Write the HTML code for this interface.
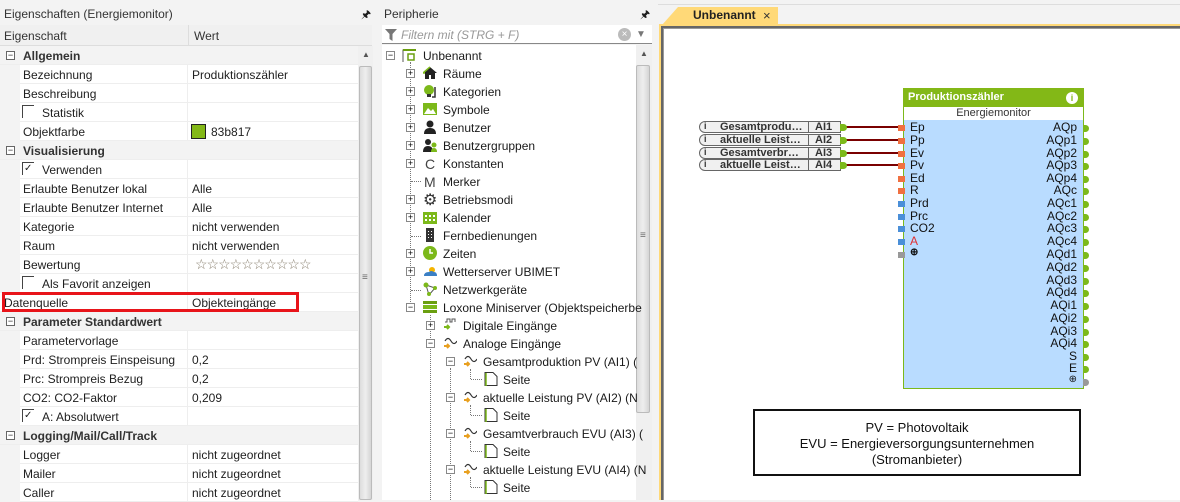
<!DOCTYPE html>
<html><head><meta charset="utf-8"><style>
*{margin:0;padding:0;box-sizing:border-box}
body{width:1180px;height:500px;overflow:hidden;background:#f3f3f3;font-family:"Liberation Sans",sans-serif;font-size:12px;color:#1e1e1e;position:relative}
.a{position:absolute;white-space:nowrap}
.row{position:absolute;left:0;width:358px;height:19px;border-bottom:1px solid #eee;background:#fff}
.row .k{position:absolute;left:23px;top:3px}
.row .v{position:absolute;left:192px;top:3px}
.row .sep{position:absolute;left:187px;top:0;width:1px;height:19px;background:#eee}
.row .ind{position:absolute;left:0;top:0;width:20px;height:19px;background:#f3f3f3}
.cat{background:#f3f3f3}
.cat .k{font-weight:bold;color:#333}
.box{position:absolute;left:6px;top:5px;width:9px;height:9px;border:1px solid #666;background:#fff;font-size:9px;line-height:7px;text-align:center}
.cb{position:absolute;left:22px;top:2px;width:12px;height:13px;border-left:1px solid #444;border-top:1px solid #444;font-size:10px;line-height:12px;padding-left:1px}
.t{position:absolute;font-size:12px;white-space:nowrap;color:#1a1a1a}
.pm{position:absolute;width:9px;height:9px;border:1px solid #888;background:#fff;font-size:9px;line-height:7px;text-align:center;color:#000}
.ic{position:absolute;width:14px;height:14px}
.pin{position:absolute;font-size:11px}
.il{position:absolute;left:910px;font-size:12px;color:#111}
.ol{position:absolute;right:103px;font-size:12px;color:#111;text-align:right}
.ip{position:absolute;left:898px;width:7px;height:6px}
.op{position:absolute;left:1083px;width:6px;height:7px;background:#7cb91a;border-radius:0 4px 4px 0}
.in{position:absolute;left:699px;width:142px;height:12px;border:1px solid #666;background:#f0f0f0;font-size:11px;font-weight:bold;color:#333;border-radius:6px 0 0 6px}
.in span{position:absolute;left:20px;top:-1px}
.in b{position:absolute;left:108px;top:-1px;border-left:1px solid #666;width:33px;height:11px;padding-left:6px;font-weight:bold}
.in i{position:absolute;left:4px;top:-1px;font-style:normal;font-size:9px}
.wire{position:absolute;left:846px;width:52px;height:2px;background:#7a0000}
.gp{position:absolute;left:840px;width:7px;height:7px;background:#7cb91a;border-radius:0 4px 4px 0}
</style></head><body>
<!-- Left panel -->
<div class="a" style="left:4px;top:7px;color:#333">Eigenschaften (Energiemonitor)</div>
<div class="pin" style="left:361px;top:6px">&#x1F588;</div>
<div class="a" style="left:0;top:25px;width:372px;height:21px;background:#f0f0f0;border-bottom:1px solid #ddd"></div>
<div class="a" style="left:188px;top:25px;width:1px;height:21px;background:#ddd"></div>
<div class="a" style="left:4px;top:29px;color:#333">Eigenschaft</div>
<div class="a" style="left:194px;top:29px;color:#333">Wert</div>

<div class="row cat" style="top:46px"><div class="box">−</div><div class="k">Allgemein</div></div>
<div class="row" style="top:65px"><div class="ind"></div><div class="k">Bezeichnung</div><div class="sep"></div><div class="v">Produktionszähler</div></div>
<div class="row" style="top:84px"><div class="ind"></div><div class="k">Beschreibung</div><div class="sep"></div></div>
<div class="row" style="top:103px"><div class="ind"></div><div class="cb"></div><div class="k" style="left:42px">Statistik</div><div class="sep"></div></div>
<div class="row" style="top:122px"><div class="ind"></div><div class="k">Objektfarbe</div><div class="sep"></div><div style="position:absolute;left:191px;top:2px;width:15px;height:15px;background:#83b817;border:1px solid #222"></div><div class="v" style="left:211px">83b817</div></div>
<div class="row cat" style="top:141px"><div class="box">−</div><div class="k">Visualisierung</div></div>
<div class="row" style="top:160px"><div class="ind"></div><div class="cb">✓</div><div class="k" style="left:42px">Verwenden</div><div class="sep"></div></div>
<div class="row" style="top:179px"><div class="ind"></div><div class="k">Erlaubte Benutzer lokal</div><div class="sep"></div><div class="v">Alle</div></div>
<div class="row" style="top:198px"><div class="ind"></div><div class="k">Erlaubte Benutzer Internet</div><div class="sep"></div><div class="v">Alle</div></div>
<div class="row" style="top:217px"><div class="ind"></div><div class="k">Kategorie</div><div class="sep"></div><div class="v">nicht verwenden</div></div>
<div class="row" style="top:236px"><div class="ind"></div><div class="k">Raum</div><div class="sep"></div><div class="v">nicht verwenden</div></div>
<div class="row" style="top:255px"><div class="ind"></div><div class="k">Bewertung</div><div class="sep"></div><div class="v" style="left:195px;top:1px;color:#8a8070;font-size:14px;letter-spacing:-1px">☆☆☆☆☆☆☆☆☆☆</div></div>
<div class="row" style="top:274px"><div class="ind"></div><div class="cb"></div><div class="k" style="left:42px">Als Favorit anzeigen</div><div class="sep"></div></div>
<div class="row" style="top:293px"><div class="k" style="left:4px">Datenquelle</div><div class="sep"></div><div class="v">Objekteingänge</div></div>
<div class="a" style="left:2px;top:292px;width:297px;height:20px;border:3px solid #e8141a"></div>
<div class="row cat" style="top:312px"><div class="box">−</div><div class="k">Parameter Standardwert</div></div>
<div class="row" style="top:331px"><div class="ind"></div><div class="k">Parametervorlage</div><div class="sep"></div></div>
<div class="row" style="top:350px"><div class="ind"></div><div class="k">Prd: Strompreis Einspeisung</div><div class="sep"></div><div class="v">0,2</div></div>
<div class="row" style="top:369px"><div class="ind"></div><div class="k">Prc: Strompreis Bezug</div><div class="sep"></div><div class="v">0,2</div></div>
<div class="row" style="top:388px"><div class="ind"></div><div class="k">CO2: CO2-Faktor</div><div class="sep"></div><div class="v">0,209</div></div>
<div class="row" style="top:407px"><div class="ind"></div><div class="cb">✓</div><div class="k" style="left:42px">A: Absolutwert</div><div class="sep"></div></div>
<div class="row cat" style="top:426px"><div class="box">−</div><div class="k">Logging/Mail/Call/Track</div></div>
<div class="row" style="top:445px"><div class="ind"></div><div class="k">Logger</div><div class="sep"></div><div class="v">nicht zugeordnet</div></div>
<div class="row" style="top:464px"><div class="ind"></div><div class="k">Mailer</div><div class="sep"></div><div class="v">nicht zugeordnet</div></div>
<div class="row" style="top:483px"><div class="ind"></div><div class="k">Caller</div><div class="sep"></div><div class="v">nicht zugeordnet</div></div>
<!-- left scrollbar -->
<div class="a" style="left:358px;top:46px;width:15px;height:454px;background:#f0f0f0"></div>
<div class="a" style="left:362px;top:50px;font-size:8px;color:#555">▲</div>
<div class="a" style="left:359px;top:66px;width:13px;height:434px;background:linear-gradient(90deg,#ddd,#eee,#d5d5d5);border:1px solid #bbb;border-radius:2px"></div>
<div class="a" style="left:362px;top:272px;font-size:10px;color:#666">≡</div>

<!-- Middle panel -->
<div class="a" style="left:384px;top:7px;color:#333">Peripherie</div>
<div class="pin" style="left:640px;top:6px">&#x1F588;</div>
<div class="a" style="left:382px;top:25px;width:270px;height:19px;background:#fff;border-bottom:1px solid #888"></div>
<svg class="a" style="left:384px;top:28px" width="14" height="14"><path d="M1 1h12l-4.5 5v7l-3-2V6z" fill="#777"/></svg>
<div class="a" style="left:401px;top:28px;color:#999;font-style:italic">Filtern mit (STRG + F)</div>
<div class="a" style="left:618px;top:28px;width:13px;height:13px;border-radius:50%;background:#bbb;color:#fff;font-size:10px;line-height:13px;text-align:center">×</div>
<div class="a" style="left:636px;top:29px;font-size:10px;color:#777">▼</div>
<div class="a" style="left:382px;top:45px;width:255px;height:455px;background:#fff"></div>
<div class="a" style="left:636px;top:45px;width:16px;height:455px;background:#f0f0f0"></div>
<div class="a" style="left:640px;top:49px;font-size:8px;color:#555">▲</div>
<div class="a" style="left:636px;top:65px;width:14px;height:348px;background:linear-gradient(90deg,#ddd,#eee,#d5d5d5);border:1px solid #bbb;border-radius:2px"></div>
<div class="a" style="left:640px;top:230px;font-size:10px;color:#666">≡</div>
<div class="a" style="left:652px;top:0;width:8px;height:500px;background:#f3f3f3"></div>

<div class="a" style="left:410px;top:62px;height:250px;border-left:1px dotted #777"></div>
<div class="a" style="left:430px;top:315px;height:185px;border-left:1px dotted #777"></div>
<div class="a" style="left:450px;top:368px;height:132px;border-left:1px dotted #777"></div>

<div class="pm" style="left:386px;top:51px">−</div>
<svg class="ic" style="left:402px;top:48px" width="16" height="16"><rect x="1" y="2" width="14" height="13" fill="#fff" stroke="#555"/><rect x="1" y="1" width="14" height="2" fill="#6a9f10"/><rect x="6" y="6" width="6" height="6" fill="none" stroke="#6a9f10" stroke-width="1.5"/></svg>
<div class="t" style="left:423px;top:49px">Unbenannt</div>
<div class="pm" style="left:406px;top:69px">+</div><svg class="ic" style="left:423px;top:66px"><path d="M7 1L0 7h2v6h4v-4h2v4h4V7h2z" fill="#222"/><path d="M7 1L0 7h2" fill="none" stroke="#7cb91a" stroke-width="1.5"/></svg><div class="t" style="left:443px;top:67px">Räume</div>
<div class="pm" style="left:406px;top:87px">+</div><svg class="ic" style="left:423px;top:84px"><circle cx="6" cy="6" r="5" fill="#7cb91a"/><rect x="4" y="10" width="4" height="3" fill="#333"/><path d="M12 3v10h-3" stroke="#333" stroke-width="1.5" fill="none"/></svg><div class="t" style="left:443px;top:85px">Kategorien</div>
<div class="pm" style="left:406px;top:105px">+</div><svg class="ic" style="left:423px;top:102px"><rect x="0" y="1" width="14" height="12" fill="#7cb91a"/><path d="M1 12l4-6 3 3 2-2 3 5z" fill="#fff"/></svg><div class="t" style="left:443px;top:103px">Symbole</div>
<div class="pm" style="left:406px;top:123px">+</div><svg class="ic" style="left:423px;top:120px"><circle cx="7" cy="4" r="3.5" fill="#222"/><path d="M1 14q0-6 6-6t6 6z" fill="#222"/></svg><div class="t" style="left:443px;top:121px">Benutzer</div>
<div class="pm" style="left:406px;top:141px">+</div><svg class="ic" style="left:423px;top:138px"><circle cx="5" cy="4" r="3" fill="#222"/><path d="M0 14q0-6 5-6t5 6z" fill="#222"/><circle cx="11" cy="7" r="2.5" fill="#7cb91a"/><path d="M8 14q0-4 3-4t3 4z" fill="#7cb91a"/></svg><div class="t" style="left:443px;top:139px">Benutzergruppen</div>
<div class="pm" style="left:406px;top:159px">+</div><div class="t" style="left:425px;top:156px;font-size:14px;color:#444">C</div><div class="t" style="left:443px;top:157px">Konstanten</div>
<div class="a" style="left:411px;top:181px;width:10px;border-top:1px dotted #777"></div><div class="t" style="left:424px;top:174px;font-size:14px;color:#444">M</div><div class="t" style="left:443px;top:175px">Merker</div>
<div class="pm" style="left:406px;top:195px">+</div><div class="t" style="left:423px;top:190px;font-size:16px;color:#333">⚙</div><div class="t" style="left:443px;top:193px">Betriebsmodi</div>
<div class="pm" style="left:406px;top:213px">+</div><svg class="ic" style="left:423px;top:210px"><rect x="0" y="2" width="14" height="12" fill="#7cb91a"/><g fill="#fff"><rect x="2" y="5" width="2" height="2"/><rect x="6" y="5" width="2" height="2"/><rect x="10" y="5" width="2" height="2"/><rect x="2" y="9" width="2" height="2"/><rect x="6" y="9" width="2" height="2"/><rect x="10" y="9" width="2" height="2"/></g></svg><div class="t" style="left:443px;top:211px">Kalender</div>
<div class="a" style="left:411px;top:236px;width:10px;border-top:1px dotted #777"></div><svg class="ic" style="left:423px;top:228px"><rect x="3" y="0" width="8" height="14" fill="#333"/><g fill="#fff"><rect x="5" y="3" width="1" height="1"/><rect x="8" y="3" width="1" height="1"/><rect x="5" y="6" width="1" height="1"/><rect x="8" y="6" width="1" height="1"/><rect x="5" y="9" width="1" height="1"/><rect x="8" y="9" width="1" height="1"/></g></svg><div class="t" style="left:443px;top:229px">Fernbedienungen</div>
<div class="pm" style="left:406px;top:249px">+</div><svg class="ic" style="left:423px;top:246px"><circle cx="7" cy="7" r="7" fill="#7cb91a"/><path d="M7 3v4h3" stroke="#fff" stroke-width="1.5" fill="none"/></svg><div class="t" style="left:443px;top:247px">Zeiten</div>
<div class="pm" style="left:406px;top:267px">+</div><svg class="ic" style="left:423px;top:264px"><circle cx="9" cy="6" r="3" fill="#f5b400"/><path d="M1 12q0-4 5-4q2-2 5 0q3 0 3 4z" fill="#3b7fc4"/></svg><div class="t" style="left:443px;top:265px">Wetterserver UBIMET</div>
<div class="a" style="left:411px;top:290px;width:10px;border-top:1px dotted #777"></div><svg class="ic" style="left:423px;top:282px"><path d="M3 3l9 3-6 7z" stroke="#555" fill="none"/><circle cx="3" cy="3" r="2.5" fill="#7cb91a"/><circle cx="12" cy="6" r="2" fill="#7cb91a"/><circle cx="6" cy="12" r="2" fill="#7cb91a"/></svg><div class="t" style="left:443px;top:283px">Netzwerkgeräte</div>
<div class="pm" style="left:406px;top:303px">−</div><svg class="ic" style="left:423px;top:300px"><rect x="0" y="1" width="14" height="3" fill="#6a9f10"/><rect x="0" y="5" width="14" height="4" fill="#7cb91a"/><rect x="0" y="10" width="14" height="3" fill="#6a9f10"/></svg><div class="t" style="left:443px;top:301px">Loxone Miniserver (Objektspeicherbe</div>
<div class="pm" style="left:426px;top:321px">+</div><svg class="ic" style="left:443px;top:318px"><path d="M2 4h2V1h3v3h2V1h3v3" stroke="#555" fill="none"/><path d="M1 9h5M4 7l2 2-2 2" stroke="#7cb91a" stroke-width="2" fill="none"/></svg><div class="t" style="left:463px;top:319px">Digitale Eingänge</div>
<div class="pm" style="left:426px;top:339px">−</div><svg class="ic" style="left:443px;top:336px"><path d="M2 5q3-5 6 0t6 0" stroke="#333" fill="none" stroke-width="1.2"/><path d="M1 10h5M4 8l2 2-2 2" stroke="#e8a020" stroke-width="2" fill="none"/></svg><div class="t" style="left:463px;top:337px">Analoge Eingänge</div>

<div class="pm" style="left:446px;top:357px">−</div><svg class="ic" style="left:463px;top:354px"><path d="M2 5q3-5 6 0t6 0" stroke="#333" fill="none" stroke-width="1.2"/><path d="M1 10h5M4 8l2 2-2 2" stroke="#e8a020" stroke-width="2" fill="none"/></svg><div class="t" style="left:483px;top:355px">Gesamtproduktion PV (AI1) (</div>
<div class="a" style="left:470px;top:369px;height:10px;border-left:1px dotted #777"></div><div class="a" style="left:471px;top:379px;width:11px;border-top:1px dotted #777"></div><svg class="ic" style="left:484px;top:372px"><path d="M1 .5h8l4 4v9H1z" fill="#fff" stroke="#333"/><path d="M2 1v13" stroke="#7cb91a" stroke-width="1.5"/></svg><div class="t" style="left:503px;top:373px">Seite</div>
<div class="pm" style="left:446px;top:393px">−</div><svg class="ic" style="left:463px;top:390px"><path d="M2 5q3-5 6 0t6 0" stroke="#333" fill="none" stroke-width="1.2"/><path d="M1 10h5M4 8l2 2-2 2" stroke="#e8a020" stroke-width="2" fill="none"/></svg><div class="t" style="left:483px;top:391px">aktuelle Leistung PV (AI2) (N</div>
<div class="a" style="left:470px;top:405px;height:10px;border-left:1px dotted #777"></div><div class="a" style="left:471px;top:415px;width:11px;border-top:1px dotted #777"></div><svg class="ic" style="left:484px;top:408px"><path d="M1 .5h8l4 4v9H1z" fill="#fff" stroke="#333"/><path d="M2 1v13" stroke="#7cb91a" stroke-width="1.5"/></svg><div class="t" style="left:503px;top:409px">Seite</div>
<div class="pm" style="left:446px;top:429px">−</div><svg class="ic" style="left:463px;top:426px"><path d="M2 5q3-5 6 0t6 0" stroke="#333" fill="none" stroke-width="1.2"/><path d="M1 10h5M4 8l2 2-2 2" stroke="#e8a020" stroke-width="2" fill="none"/></svg><div class="t" style="left:483px;top:427px">Gesamtverbrauch EVU (AI3) (</div>
<div class="a" style="left:470px;top:441px;height:10px;border-left:1px dotted #777"></div><div class="a" style="left:471px;top:451px;width:11px;border-top:1px dotted #777"></div><svg class="ic" style="left:484px;top:444px"><path d="M1 .5h8l4 4v9H1z" fill="#fff" stroke="#333"/><path d="M2 1v13" stroke="#7cb91a" stroke-width="1.5"/></svg><div class="t" style="left:503px;top:445px">Seite</div>
<div class="pm" style="left:446px;top:465px">−</div><svg class="ic" style="left:463px;top:462px"><path d="M2 5q3-5 6 0t6 0" stroke="#333" fill="none" stroke-width="1.2"/><path d="M1 10h5M4 8l2 2-2 2" stroke="#e8a020" stroke-width="2" fill="none"/></svg><div class="t" style="left:483px;top:463px">aktuelle Leistung EVU (AI4) (N</div>
<div class="a" style="left:470px;top:477px;height:10px;border-left:1px dotted #777"></div><div class="a" style="left:471px;top:487px;width:11px;border-top:1px dotted #777"></div><svg class="ic" style="left:484px;top:480px"><path d="M1 .5h8l4 4v9H1z" fill="#fff" stroke="#333"/><path d="M2 1v13" stroke="#7cb91a" stroke-width="1.5"/></svg><div class="t" style="left:503px;top:481px">Seite</div>

<!-- Right area -->
<div class="a" style="left:658px;top:4px;width:522px;height:1px;background:#ddd"></div>
<svg class="a" style="left:662px;top:6px" width="120" height="20"><path d="M0 19L16 1h100v18z" fill="#ffd978"/></svg>
<div class="a" style="left:693px;top:8px;font-weight:bold;color:#222">Unbenannt</div>
<div class="a" style="left:763px;top:8px;font-size:13px;color:#333">×</div>
<div class="a" style="left:659px;top:24px;width:521px;height:476px;background:#ffd978"></div>
<div class="a" style="left:661px;top:26px;width:519px;height:474px;background:#666"></div>
<div class="a" style="left:663px;top:28px;width:517px;height:472px;background:#fff;border-left:1px solid #999;border-top:1px solid #999"></div>

<div class="wire" style="top:126px"></div><div class="wire" style="top:139px"></div><div class="wire" style="top:152px"></div><div class="wire" style="top:164px"></div>
<div class="in" style="top:121px"><i>i</i><span>Gesamtprodu…</span><b>AI1</b></div>
<div class="in" style="top:134px"><i>i</i><span>aktuelle Leist…</span><b>AI2</b></div>
<div class="in" style="top:147px"><i>i</i><span>Gesamtverbr…</span><b>AI3</b></div>
<div class="in" style="top:159px"><i>i</i><span>aktuelle Leist…</span><b>AI4</b></div>
<div class="gp" style="top:124px"></div><div class="gp" style="top:137px"></div><div class="gp" style="top:150px"></div><div class="gp" style="top:162px"></div>

<div class="a" style="left:903px;top:88px;width:181px;height:301px;background:#b9dcff;border:1px solid #7cb91a"></div>
<div class="a" style="left:903px;top:88px;width:181px;height:19px;background:#83b817"></div>
<div class="a" style="left:908px;top:91px;color:#fff;font-weight:bold;font-size:11px">Produktionszähler</div>
<div class="a" style="left:1066px;top:92px;width:12px;height:12px;border-radius:50%;background:#fff;color:#83b817;font-size:9px;font-weight:bold;text-align:center;line-height:12px">i</div>
<div class="a" style="left:904px;top:107px;width:179px;height:13px;background:#fff;font-size:11px;text-align:center;color:#333;line-height:13px">Energiemonitor</div>

<div class="il" style="top:120px">Ep</div><div class="il" style="top:133px">Pp</div><div class="il" style="top:146px">Ev</div><div class="il" style="top:158px">Pv</div><div class="il" style="top:171px">Ed</div><div class="il" style="top:183px">R</div><div class="il" style="top:196px">Prd</div><div class="il" style="top:209px">Prc</div><div class="il" style="top:221px">CO2</div><div class="il" style="top:234px;color:#e03030">A</div><div class="il" style="top:247px;font-weight:bold;font-size:10px">⊕</div>
<div class="ip" style="top:125px;background:#f07040"></div><div class="ip" style="top:138px;background:#f07040"></div><div class="ip" style="top:151px;background:#f07040"></div><div class="ip" style="top:163px;background:#f07040"></div><div class="ip" style="top:176px;background:#f07040"></div><div class="ip" style="top:188px;background:#f07040"></div><div class="ip" style="top:201px;background:#4a8fd8"></div><div class="ip" style="top:214px;background:#4a8fd8"></div><div class="ip" style="top:226px;background:#4a8fd8"></div><div class="ip" style="top:239px;background:#4a8fd8"></div><div class="ip" style="top:252px;background:#999"></div>

<div class="ol" style="top:120px">AQp</div><div class="ol" style="top:133px">AQp1</div><div class="ol" style="top:146px">AQp2</div><div class="ol" style="top:158px">AQp3</div><div class="ol" style="top:171px">AQp4</div><div class="ol" style="top:183px">AQc</div><div class="ol" style="top:196px">AQc1</div><div class="ol" style="top:209px">AQc2</div><div class="ol" style="top:221px">AQc3</div><div class="ol" style="top:234px">AQc4</div><div class="ol" style="top:247px">AQd1</div><div class="ol" style="top:260px">AQd2</div><div class="ol" style="top:273px">AQd3</div><div class="ol" style="top:285px">AQd4</div><div class="ol" style="top:298px">AQi1</div><div class="ol" style="top:311px">AQi2</div><div class="ol" style="top:324px">AQi3</div><div class="ol" style="top:336px">AQi4</div><div class="ol" style="top:349px">S</div><div class="ol" style="top:361px">E</div><div class="ol" style="top:374px;font-size:10px">⊕</div>
<div class="op" style="top:125px"></div><div class="op" style="top:138px"></div><div class="op" style="top:151px"></div><div class="op" style="top:163px"></div><div class="op" style="top:176px"></div><div class="op" style="top:188px"></div><div class="op" style="top:201px"></div><div class="op" style="top:214px"></div><div class="op" style="top:226px"></div><div class="op" style="top:239px"></div><div class="op" style="top:252px"></div><div class="op" style="top:265px"></div><div class="op" style="top:278px"></div><div class="op" style="top:290px"></div><div class="op" style="top:303px"></div><div class="op" style="top:316px"></div><div class="op" style="top:329px"></div><div class="op" style="top:341px"></div><div class="op" style="top:354px"></div><div class="op" style="top:366px"></div><div class="op" style="top:379px;background:#999"></div>

<div class="a" style="left:753px;top:409px;width:328px;height:67px;border:2px solid #111;background:#fff;text-align:center;font-size:13px;line-height:16px;padding-top:9px;color:#111">PV = Photovoltaik<br>EVU = Energieversorgungsunternehmen<br>(Stromanbieter)</div>
</body></html>
